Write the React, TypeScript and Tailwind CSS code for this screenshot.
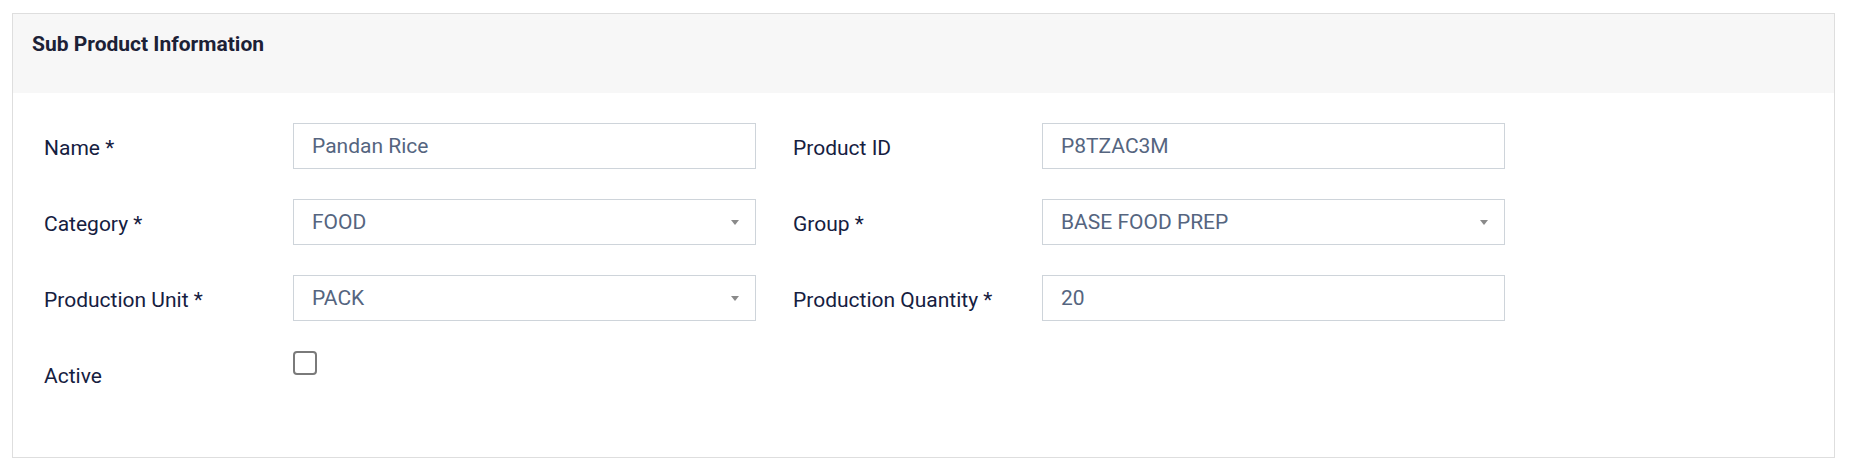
import React from "react";

type Field = {
  label: string;
  value?: string;
  select?: boolean;
};

const rows: [Field, Field][] = [
  [
    { label: "Name *", value: "Pandan Rice" },
    { label: "Product ID", value: "P8TZAC3M" },
  ],
  [
    { label: "Category *", value: "FOOD", select: true },
    { label: "Group *", value: "BASE FOOD PREP", select: true },
  ],
  [
    { label: "Production Unit *", value: "PACK", select: true },
    { label: "Production Quantity *", value: "20" },
  ],
];

function Control({ field }: { field: Field }) {
  return (
    <div className="flex items-center justify-between w-[463px] h-[46px] border border-[#ced4da] bg-white pl-[18px] pr-[16px] text-[21px] leading-[31px] text-[#55657f]">
      <span>{field.value}</span>
      {field.select && (
        <svg width="8" height="5" viewBox="0 0 8 5" aria-hidden="true">
          <path d="M0 0h8L4 5z" fill="#8a8a8a" />
        </svg>
      )}
    </div>
  );
}

function FormItem({ field }: { field: Field }) {
  return (
    <div className="flex items-start">
      <label className="w-[249px] pt-[10px] text-[21px] leading-[31px] text-[#15203f]">
        {field.label}
      </label>
      <Control field={field} />
    </div>
  );
}

export default function App() {
  return (
    <div
      className="w-[1849px] h-[466px] bg-white pt-[13px] pl-[12px]"
      style={{ fontFamily: "Roboto, 'Liberation Sans', sans-serif" }}
    >
      <div className="w-[1823px] h-[445px] border border-[#dedede] bg-white">
        <div className="h-[79px] bg-[#f7f7f7] pl-[19px] pt-[15px]">
          <h2 className="text-[21px] leading-[31px] font-bold text-[#1c2136]">
            Sub Product Information
          </h2>
        </div>

        <div className="pl-[31px] pt-[30px] flex flex-col gap-[30px]">
          {rows.map(([left, right], i) => (
            <div key={i} className="flex gap-[37px]">
              <FormItem field={left} />
              <FormItem field={right} />
            </div>
          ))}

          <div className="flex items-start">
            <label className="w-[249px] pt-[10px] text-[21px] leading-[31px] text-[#15203f]">
              Active
            </label>
            <input
              type="checkbox"
              className="appearance-none w-[24px] h-[24px] border-2 border-[#7a7a7a] rounded-[4px] bg-white"
            />
          </div>
        </div>
      </div>
    </div>
  );
}
